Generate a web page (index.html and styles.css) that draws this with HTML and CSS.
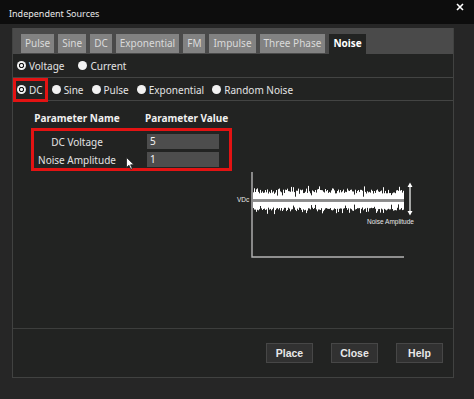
FILE: index.html
```html
<!DOCTYPE html>
<html lang="en">
<head>
  <meta charset="UTF-8">
  <meta name="viewport" content="width=device-width, initial-scale=1.0">
  <title>Independent Sources</title>
  <link rel="stylesheet" href="styles.css">
</head>
<body>
  <div class="titlebar">
    <span class="title">Independent Sources</span>
    <svg class="close" width="8" height="8" viewBox="0 0 8 8"><path d="M1 1L7 7M7 1L1 7" stroke="#fff" stroke-width="1.6"/></svg>
  </div>
  <div class="frame">
    <div class="tabstrip">
      <span class="tab">Pulse</span>
      <span class="tab">Sine</span>
      <span class="tab">DC</span>
      <span class="tab">Exponential</span>
      <span class="tab">FM</span>
      <span class="tab">Impulse</span>
      <span class="tab">Three Phase</span>
      <span class="tab active">Noise</span>
    </div>
    <div class="radio-row source-kind">
      <label class="radio checked">Voltage</label>
      <label class="radio">Current</label>
    </div>
    <div class="radio-row noise-shape">
      <label class="radio checked marked">DC</label>
      <label class="radio">Sine</label>
      <label class="radio">Pulse</label>
      <label class="radio">Exponential</label>
      <label class="radio">Random Noise</label>
    </div>
    <div class="content">
      <div class="params">
        <div class="param-head">
          <span>Parameter Name</span>
          <span class="value-head">Parameter Value</span>
        </div>
        <div class="param-box">
          <div class="param-row">
            <span class="param-name">DC Voltage</span>
            <span class="param-input">5</span>
          </div>
          <div class="param-row">
            <span class="param-name">Noise Amplitude</span>
            <span class="param-input">1</span>
          </div>
        </div>
      </div>
      <svg class="graph" width="190" height="100" viewBox="0 0 190 100">
        <path d="M19 7V92H171" fill="none" stroke="#b4b4b4" stroke-width="1.4"/>
        <path id="noise" d="" stroke="#fff" stroke-width="1" fill="none"/>
        <path d="M20 35.5H171" stroke="#8a8a8a" stroke-width="1"/>
        <text x="4" y="37" class="graph-label">VDc</text>
        <path d="M177 20V48" stroke="#fff" stroke-width="1.2"/>
        <path d="M174.5 22L177 17.5L179.5 22ZM174.5 46L177 50.5L179.5 46Z" fill="#fff"/>
        <text x="134" y="59" class="graph-label">Noise Amplitude</text>
      </svg>
    </div>
    <div class="actions">
      <button>Place</button>
      <button>Close</button>
      <button>Help</button>
    </div>
  </div>
  <svg class="cursor" width="9" height="13" viewBox="0 0 9 13"><path d="M0.5 0.5V10.5L3 8.3L4.8 12.3L6.3 11.6L4.6 7.8H8Z" fill="#fff" stroke="#222" stroke-width="0.8"/></svg>
  <script>
    // fake noise band for the preview graph
    let seed = 7;
    const rand = () => {
      seed = (seed * 16807) % 2147483647;
      return seed / 2147483647;
    };
    let d = '';
    for (let x = 20.5; x < 171; x += 1) {
      const top = 28.5 - rand() * 4 - (rand() > 0.75 ? rand() * 4 : 0);
      const bottom = 42.5 + rand() * 3 + (rand() > 0.75 ? rand() * 4 : 0);
      const upperStart = rand() > 0.88 ? top + rand() * 5 : top;
      const lowerEnd = rand() > 0.88 ? bottom - rand() * 5 : bottom;
      d += `M${x} ${upperStart.toFixed(1)}V34.5M${x} 36.5V${lowerEnd.toFixed(1)}`;
    }
    document.querySelector('#noise').setAttribute('d', d);
  </script>
</body>
</html>
```

FILE: styles.css
```css
* {
  box-sizing: border-box;
}
body, html {
  margin: 0;
}
body {
  background: #262626;
  font-family: "Noto Sans", sans-serif;
  font-size: 10px;
  color: #e4e4e4;
  height: 399px;
  overflow: hidden;
}
.titlebar {
  display: flex;
  align-items: center;
  justify-content: space-between;
  height: 24px;
  padding: 0 10px 4px 9px;
  background: #0d0d0d;
}
.title {
  font-size: 9px;
  color: #e8e8e8;
  padding-top: 6px;
}
.close {
  margin-bottom: 6px;
}
.frame {
  display: flex;
  flex-direction: column;
  width: 442px;
  height: 350px;
  margin: 4px 0 0 12px;
  background: #222322;
  border: 1px solid #414241;
  border-top: 0;
}
.tabstrip {
  display: flex;
  align-items: flex-end;
  gap: 4px;
  height: 26px;
  padding-left: 8px;
  background: #4a4a4a;
}
.tab {
  height: 19px;
  line-height: 19px;
  padding: 0 4px;
  background: #828282;
  color: #dadada;
  margin-bottom: 1px;
}
.tab.active {
  background: #222322;
  color: #fff;
  font-weight: bold;
  height: 20px;
  margin-bottom: 0;
  padding-bottom: 1px;
}
.radio-row {
  display: flex;
  align-items: center;
  border-bottom: 1px solid #434443;
  padding-left: 4px;
}
.source-kind {
  height: 24px;
  gap: 14px;
}
.noise-shape {
  height: 23px;
  gap: 8px;
  padding-top: 1px;
}
.radio {
  display: flex;
  align-items: center;
  gap: 3px;
  height: 16px;
}
.radio::before {
  content: "";
  width: 9px;
  height: 9px;
  border-radius: 50%;
  background: #f2f2f2;
}
.radio.checked::before {
  background: radial-gradient(circle, #f2f2f2 0 1.3px, #1a1a1a 1.6px 2.6px, #f2f2f2 2.9px);
}
.marked {
  outline: 3px solid #e31313;
  outline-offset: 1px;
  padding-right: 1px;
}
.content {
  flex: 1;
  display: flex;
}
.params {
  padding: 10px 0 0 18px;
  width: 219px;
}
.param-head {
  display: grid;
  grid-template-columns: 86px auto;
  column-gap: 25px;
  margin-left: 3px;
  font-weight: bold;
  color: #f0f0f0;
  line-height: 14px;
  white-space: nowrap;
}
.param-head span {
  text-align: center;
}
.param-head .value-head {
  text-align: left;
}
.param-box {
  display: flex;
  flex-direction: column;
  gap: 3px;
  margin-top: 3px;
  padding: 3px 0 1px;
  border: 3px solid #e31313;
}
.param-row {
  display: grid;
  grid-template-columns: 86px 72px;
  column-gap: 27px;
  align-items: center;
}
.param-name {
  text-align: center;
  white-space: nowrap;
  color: #e4e4e4;
}
.param-input {
  height: 15px;
  line-height: 15px;
  padding-left: 3px;
  background: #4d4d4d;
  color: #f4f4f4;
}
.graph {
  margin: 64px 0 0 1px;
}
.graph-label {
  font-family: "Liberation Sans", sans-serif;
  font-size: 6.5px;
  fill: #e8e8e8;
}
.actions {
  display: flex;
  justify-content: flex-end;
  gap: 18px;
  height: 49px;
  padding: 14px 10px 0 0;
  border-top: 1px solid #3d3e3d;
}
.actions button {
  width: 47px;
  height: 20px;
  padding: 0;
  background: #313131;
  border: 1px solid #474747;
  color: #e8e8e8;
  font-family: "Liberation Sans", sans-serif;
  font-weight: bold;
  font-size: 10.5px;
}
.cursor {
  position: absolute;
  left: 126px;
  top: 157px;
}
```
